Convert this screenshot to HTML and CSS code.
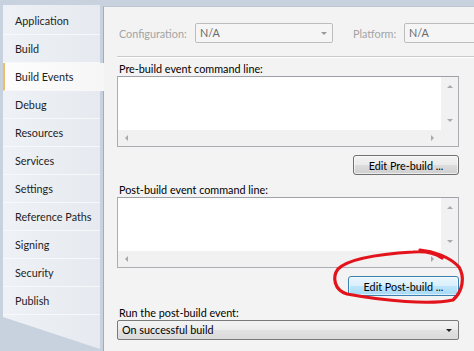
FILE: index.html
```html
<!DOCTYPE html>
<html lang="en">
<head>
    <meta charset="UTF-8">
    <title>Build Events</title>
    <link rel="stylesheet" href="styles.css">
</head>
<body>
    <div class="window">
        <div class="sidebar">
            <ul class="tabs">
                <li>Application</li>
                <li>Build</li>
                <li class="active">Build Events</li>
                <li>Debug</li>
                <li>Resources</li>
                <li>Services</li>
                <li>Settings</li>
                <li>Reference Paths</li>
                <li>Signing</li>
                <li>Security</li>
                <li>Publish</li>
            </ul>
            <div class="tabs-end"></div>
        </div>

        <div class="page">
            <div class="config-row">
                <span class="dim config-label">Configuration:</span>
                <div class="combo config-combo">N/A<span class="arrow"></span></div>
                <span class="dim platform-label">Platform:</span>
                <div class="combo platform-combo">N/A</div>
            </div>
            <div class="separator"></div>

            <div class="field-label">Pre-build event command line:</div>
            <div class="cmdbox">
                <div class="cmd-text"></div>
                <div class="vscroll"><span class="tri up"></span><span class="tri down"></span></div>
                <div class="hscroll"><span class="tri left"></span><span class="tri right"></span></div>
                <div class="corner"></div>
            </div>
            <div class="btn-row">
                <button class="btn pre">Edit Pre-build ...</button>
            </div>

            <div class="field-label post-label">Post-build event command line:</div>
            <div class="cmdbox">
                <div class="cmd-text"></div>
                <div class="vscroll"><span class="tri up"></span><span class="tri down"></span></div>
                <div class="hscroll"><span class="tri left"></span><span class="tri right"></span></div>
                <div class="corner"></div>
            </div>
            <div class="btn-row">
                <button class="btn post hot">Edit Post-build ...</button>
            </div>

            <div class="field-label run-label">Run the post-build event:</div>
            <div class="select">On successful build<span class="arrow dark"></span></div>
        </div>
    </div>

    <!-- red marker circle drawn over the screenshot -->
    <svg class="scribble" width="474" height="351" viewBox="0 0 474 351">
        <path d="M 420 250 C 433 251 450 257 459 267 C 465 277 463 291 453 300 C 430 305 385 301 347 294 C 334 290 332 277 338 269 C 348 259 380 254 413 252 C 425 251 436 254 442 258"
              fill="none" stroke="#e3131b" stroke-width="3.2" stroke-linecap="round" stroke-linejoin="round"/>
    </svg>
</body>
</html>
```

FILE: styles.css
```css
* {
    box-sizing: border-box;
}
body {
    margin: 0;
    width: 474px;
    height: 351px;
    overflow: hidden;
    position: relative;
    background-color: #c8d2df;
    font-family: Lato, "Noto Sans", sans-serif;
    font-size: 10.8px;
    color: #111;
}
.window {
    display: flex;
    height: 100%;
    padding-top: 5px;
}
.sidebar {
    position: relative;
    z-index: 1;
    display: flex;
    flex-direction: column;
    width: 97px;
    margin-left: 3px;
    flex-shrink: 0;
}
.tabs {
    list-style: none;
    margin: 0;
    padding: 2px 0 0;
    background: linear-gradient(to right, #eef1f5, #e6eaf0);
}
.tabs li {
    height: 28px;
    line-height: 27px;
    padding-left: 12px;
    border-bottom: 1px solid #f7f8fa;
    color: #1e1e1e;
    white-space: nowrap;
}
.tabs li.active {
    background: linear-gradient(to right, #fdfdfd, #f6f6f6);
    border-left: 2px solid #efbd6a;
    padding-left: 10px;
    margin-right: -4px;
}
.tabs-end {
    flex: 1;
    background: linear-gradient(to right, #eef1f5, #e6eaf0);
    clip-path: polygon(0 0, 100% 0, 100% calc(100% - 2px), 0 2px);
}
.page {
    flex: 1;
    margin-left: 3px;
    margin-top: 1px;
    overflow: hidden;
    background-color: #f3f3f3;
    border-left: 1px solid #a3adba;
    border-top: 1px solid #bcc5d0;
    padding: 16px 15px 0 13px;
}
.config-row {
    display: flex;
    align-items: center;
    height: 20px;
}
.dim {
    color: #a3a3a3;
}
.config-label {
    width: 78px;
    padding-left: 2px;
    flex-shrink: 0;
}
.platform-label {
    width: 51px;
    margin-left: 20px;
    flex-shrink: 0;
}
.combo {
    position: relative;
    height: 20px;
    line-height: 18px;
    padding-left: 4px;
    border: 1px solid #bdbdbd;
    border-radius: 2px;
    background-color: #f5f5f5;
    color: #6a6a6a;
    flex-shrink: 0;
}
.config-combo {
    width: 138px;
}
.platform-combo {
    width: 100px;
}
.arrow {
    position: absolute;
    right: 5px;
    top: 8px;
    border-left: 3px solid transparent;
    border-right: 3px solid transparent;
    border-top: 3px solid #9a9a9a;
}
.arrow.dark {
    border-top-color: #222;
    right: 6px;
}
.separator {
    height: 2px;
    margin: 13px -15px 0 0;
    border-top: 1px solid #c8c8c8;
    border-bottom: 1px solid #fff;
}
.field-label {
    line-height: 14px;
    margin-top: 4px;
    padding-left: 2px;
    color: #000;
}
.post-label {
    margin-top: 8px;
}
.run-label {
    margin-top: 10px;
}
.cmdbox {
    display: grid;
    grid-template-columns: 1fr 17px;
    grid-template-rows: 1fr 16px;
    height: 71px;
    border: 1px solid #abadb3;
    border-top-color: #9ea1a8;
    background-color: #fff;
}
.cmd-text {
    background-color: #fff;
}
.vscroll, .hscroll, .corner {
    position: relative;
    background-color: #f1f1f1;
}
.tri {
    position: absolute;
    width: 0;
    height: 0;
}
.tri.up {
    left: 6px;
    top: 8px;
    border-left: 3px solid transparent;
    border-right: 3px solid transparent;
    border-bottom: 3px solid #a9a9a9;
}
.tri.down {
    left: 6px;
    bottom: 8px;
    border-left: 3px solid transparent;
    border-right: 3px solid transparent;
    border-top: 3px solid #a9a9a9;
}
.tri.left {
    left: 7px;
    top: 5px;
    border-top: 3px solid transparent;
    border-bottom: 3px solid transparent;
    border-right: 3px solid #a9a9a9;
}
.tri.right {
    right: 7px;
    top: 5px;
    border-top: 3px solid transparent;
    border-bottom: 3px solid transparent;
    border-left: 3px solid #a9a9a9;
}
.btn-row {
    display: flex;
    justify-content: flex-end;
    margin-top: 8px;
}
.btn {
    height: 20px;
    padding: 0;
    border: 1px solid #707070;
    border-radius: 3px;
    background: linear-gradient(#f2f2f2 0%, #ebebeb 49%, #dddddd 50%, #cfcfcf 100%);
    box-shadow: inset 0 0 0 1px rgba(255, 255, 255, 0.6);
    font-family: inherit;
    font-size: inherit;
    color: #000;
}
.btn.pre {
    width: 106px;
}
.btn.post {
    width: 111px;
}
.btn.hot {
    border-color: #3c7fb1;
    background: linear-gradient(#eaf6fd 0%, #d9f0fc 49%, #bee6fd 50%, #a7d9f5 100%);
}
.select {
    position: relative;
    height: 20px;
    line-height: 18px;
    padding-left: 4px;
    border: 1px solid #7a7a7a;
    border-radius: 2px;
    background: linear-gradient(#f3f3f3 0%, #ececec 49%, #e2e2e2 50%, #dadada 100%);
    color: #000;
}
.scribble {
    position: absolute;
    left: 0;
    top: 0;
    pointer-events: none;
}
```
